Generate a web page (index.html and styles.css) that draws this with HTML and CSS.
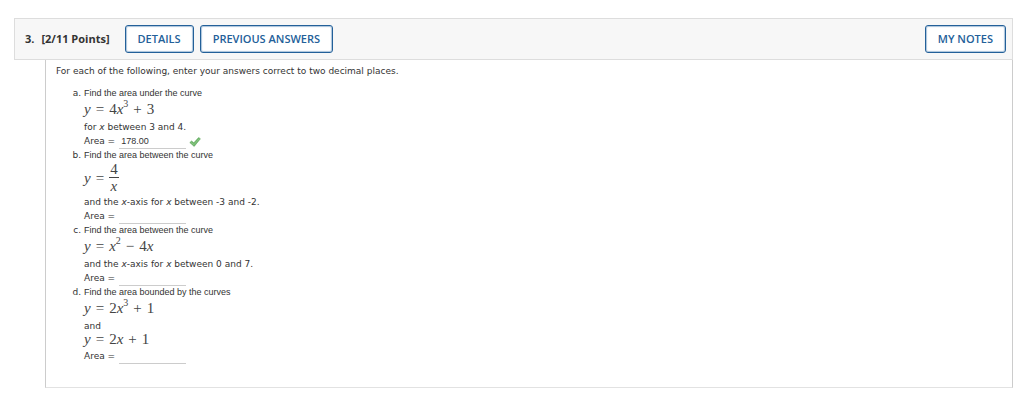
FILE: index.html
```html
<!DOCTYPE html>
<html lang="en">
<head>
  <meta charset="UTF-8" />
  <meta name="viewport" content="width=device-width, initial-scale=1.0" />
  <title>Question 3</title>
  <link rel="stylesheet" href="styles.css">
</head>
<body>
  <div class="question">
    <header class="question-header">
      <h2><span class="number">3.</span>[2/11 Points]</h2>
      <button type="button">DETAILS</button>
      <button type="button">PREVIOUS ANSWERS</button>
      <button type="button" class="notes">MY NOTES</button>
    </header>

    <div class="question-body">
      <p class="intro">For each of the following, enter your answers correct to two decimal places.</p>

      <ol class="parts">
        <li>
          <p class="prompt">Find the area under the curve</p>
          <div class="math"><i>y</i><span class="op">=</span>4<i>x</i><sup>3</sup><span class="op">+</span>3</div>
          <p>for <em>x</em> between 3 and 4.</p>
          <div class="answer">
            <label for="area-a">Area =</label>
            <input type="text" id="area-a" value="178.00" />
            <svg class="check" viewBox="0 0 12 12" role="img" aria-label="Correct">
              <path d="M0.8 6.6 L2.6 5 L4.8 6.8 L9.6 1.6 L11.4 2.8 L5.2 10.4 Z" fill="#6db56a" stroke="#5fa65e" stroke-width="0.6" stroke-linejoin="round" />
              <path d="M2 6.4 L5 8.6 L10.4 2.6" fill="none" stroke="#8fcb88" stroke-width="0.8" />
            </svg>
          </div>
        </li>
        <li>
          <p class="prompt">Find the area between the curve</p>
          <div class="math tall"><i>y</i><span class="op">=</span><span class="frac"><span class="top">4</span><i>x</i></span></div>
          <p>and the <em>x</em>-axis for <em>x</em> between -3 and -2.</p>
          <div class="answer">
            <label for="area-b">Area =</label>
            <input type="text" id="area-b" />
          </div>
        </li>
        <li>
          <p class="prompt">Find the area between the curve</p>
          <div class="math"><i>y</i><span class="op">=</span><i>x</i><sup>2</sup><span class="op">−</span>4<i>x</i></div>
          <p>and the <em>x</em>-axis for <em>x</em> between 0 and 7.</p>
          <div class="answer">
            <label for="area-c">Area =</label>
            <input type="text" id="area-c" />
          </div>
        </li>
        <li>
          <p class="prompt">Find the area bounded by the curves</p>
          <div class="math"><i>y</i><span class="op">=</span>2<i>x</i><sup>3</sup><span class="op">+</span>1</div>
          <p>and</p>
          <div class="math short"><i>y</i><span class="op">=</span>2<i>x</i><span class="op">+</span>1</div>
          <div class="answer">
            <label for="area-d">Area =</label>
            <input type="text" id="area-d" />
          </div>
        </li>
      </ol>
    </div>
  </div>
</body>
</html>
```
FILE: styles.css
```css
* {
  box-sizing: border-box;
}

body {
  margin: 18px 11px 17px 14px;
  background: #fff;
  color: #333;
  font-family: Verdana, "DejaVu Sans", sans-serif;
  font-size: 9px;
  line-height: 14px;
}

h2,
p {
  margin: 0;
}

.question-header {
  display: flex;
  align-items: center;
  gap: 6px;
  padding: 6px;
  background: #f7f7f7;
  border: 1px solid #ddd;
}

.question-header h2 {
  margin: 0 9px 0 4px;
  font-family: "Open Sans", sans-serif;
  font-size: 11px;
  font-weight: 700;
}

.number {
  margin-right: 7px;
}

button {
  height: 28px;
  padding: 0 12px 2px;
  background: #fff;
  border: 1px solid #236099;
  border-radius: 3px;
  box-shadow: inset 0 0 1px 1px #a9c3da;
  color: #236099;
  font-family: "Open Sans", sans-serif;
  font-size: 11px;
  font-weight: 600;
  cursor: pointer;
}

.notes {
  margin-left: auto;
}

.question-body {
  margin-left: 31px;
  padding: 4px 10px 24px;
  border: 1px solid #ccc;
  border-top: none;
  border-bottom-color: #e2e2e2;
}

.parts {
  margin: 8px 0 0;
  padding-left: 28px;
  list-style: lower-alpha;
}

.prompt,
input {
  font-family: "Liberation Sans", Arial, sans-serif;
}

.math {
  display: flex;
  align-items: center;
  height: 20px;
  padding-bottom: 2px;
  color: #444;
  font-family: "Liberation Serif", serif;
  font-size: 15px;
}

.math sup {
  align-self: flex-start;
  font-size: 10px;
  line-height: 8px;
}

.math .op {
  margin: 0 5px;
}

.math.tall {
  height: 33px;
}

.math.short {
  height: 16px;
  padding-bottom: 5px;
}

.frac {
  display: flex;
  flex-direction: column;
  align-items: center;
  line-height: 16px;
}

.frac .top {
  padding: 0 1px;
  border-bottom: 1px solid #444;
}

.answer {
  display: flex;
  height: 14px;
}

input {
  width: 67px;
  height: 15px;
  margin-left: 4px;
  padding: 0 2px;
  background: none;
  border: none;
  border-bottom: 1px solid #ccc;
  color: #333;
  font-size: 9px;
}

.check {
  width: 12px;
  height: 12px;
  margin: 2px 0 0 3px;
}
```
